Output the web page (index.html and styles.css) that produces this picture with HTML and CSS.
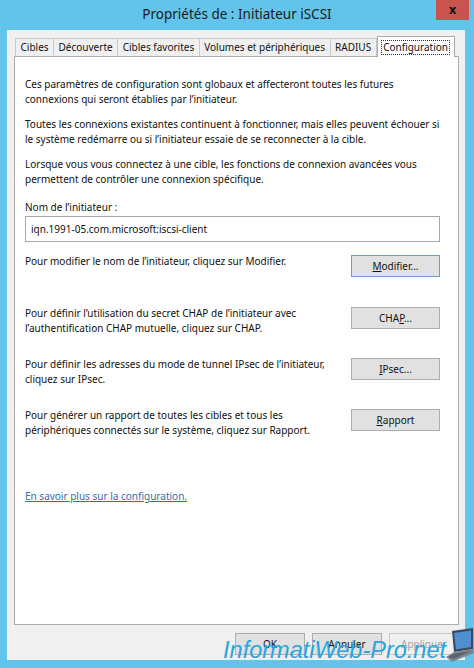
FILE: index.html
```html
<!DOCTYPE html>
<html lang="fr">
<head>
    <meta charset="UTF-8">
    <meta name="viewport" content="width=device-width, initial-scale=1.0">
    <title>Propriétés de : Initiateur iSCSI</title>
    <link rel="stylesheet" href="styles.css">
</head>
<body>

    <div class="window">
        <div class="titlebar">
            <span class="title">Propriétés de : Initiateur iSCSI</span>
            <button class="close">x</button>
        </div>

        <div class="client">
            <div class="tabs">
                <div class="tab">Cibles</div>
                <div class="tab">Découverte</div>
                <div class="tab">Cibles favorites</div>
                <div class="tab">Volumes et périphériques</div>
                <div class="tab">RADIUS</div>
                <div class="tab active"><span class="focus">Configuration</span></div>
            </div>

            <div class="panel">
                <p>Ces paramètres de configuration sont globaux et affecteront toutes les futures<br>connexions qui seront établies par l’initiateur.</p>
                <p>Toutes les connexions existantes continuent à fonctionner, mais elles peuvent échouer si<br>le système redémarre ou si l’initiateur essaie de se reconnecter à la cible.</p>
                <p>Lorsque vous vous connectez à une cible, les fonctions de connexion avancées vous<br>permettent de contrôler une connexion spécifique.</p>

                <label class="field-label" for="name">Nom de l’initiateur :</label>
                <input class="field" id="name" type="text" value="iqn.1991-05.com.microsoft:iscsi-client" readonly>

                <div class="row first">
                    <span>Pour modifier le nom de l’initiateur, cliquez sur Modifier.</span>
                    <button class="btn default"><u>M</u>odifier...</button>
                </div>
                <div class="row">
                    <span>Pour définir l’utilisation du secret CHAP de l’initiateur avec<br>l’authentification CHAP mutuelle, cliquez sur CHAP.</span>
                    <button class="btn">CHA<u>P</u>...</button>
                </div>
                <div class="row">
                    <span>Pour définir les adresses du mode de tunnel IPsec de l’initiateur,<br>cliquez sur IPsec.</span>
                    <button class="btn"><u>I</u>Psec...</button>
                </div>
                <div class="row">
                    <span>Pour générer un rapport de toutes les cibles et tous les<br>périphériques connectés sur le système, cliquez sur Rapport.</span>
                    <button class="btn"><u>R</u>apport</button>
                </div>

                <a class="more" href="#">En savoir plus sur la configuration.</a>
            </div>

            <div class="footer">
                <button class="btn small">OK</button>
                <button class="btn small">Annuler</button>
                <button class="btn small" disabled>Appliquer</button>
            </div>
        </div>

        <div class="watermark">
            <span>InformatiWeb-Pro.net</span>
            <svg width="28" height="36" viewBox="0 0 28 36">
                <path d="M6 4 L27 1 L27 22 L8 25 Z" fill="#3a4a5c"/>
                <path d="M8 6 L25 3.5 L25 20 L10 22.5 Z" fill="#4d8fd0"/>
                <path d="M0 30 L8 25 L27 22 L28 26 L6 35 Z" fill="#7c8590"/>
                <path d="M2 30 L9 26.5 L25 24 L8 32 Z" fill="#5c636b"/>
            </svg>
        </div>
    </div>

</body>
</html>
```

FILE: styles.css
```css
body {
    margin: 0;
    font-family: "Noto Sans", "Open Sans", sans-serif;
    font-size: 10px;
    color: #111;
}
.window {
    position: relative;
    width: 474px;
    height: 668px;
    background-color: #62c4ea;
    display: flex;
    flex-direction: column;
    overflow: hidden;
}
.titlebar {
    height: 30px;
    display: grid;
    grid-template-columns: 1fr auto 1fr;
    align-items: start;
}
.title {
    grid-column: 2;
    font-size: 13.5px;
    line-height: 28px;
    color: #1a1a1a;
}
.close {
    grid-column: 3;
    justify-self: end;
    width: 33px;
    height: 20px;
    margin-right: 5px;
    border: none;
    background-color: #c9544f;
    color: #111;
    font-family: "DejaVu Sans", sans-serif;
    font-weight: bold;
    font-size: 12px;
    line-height: 18px;
    padding: 0;
}
.client {
    flex: 1;
    margin: 0 9px 8px 7px;
    padding: 6px 6px 0 7px;
    background-color: #f0f0f0;
    display: flex;
    flex-direction: column;
}

/* onglets */
.tabs {
    display: flex;
    align-items: flex-end;
    height: 20px;
    padding-left: 1px;
    position: relative;
    z-index: 1;
}
.tab {
    height: 18px;
    box-sizing: border-box;
    border: 1px solid #c9c9c9;
    border-bottom: none;
    background-color: #f0f0f0;
    padding: 0 4.5px;
    line-height: 16px;
    margin-right: -1px;
    white-space: nowrap;
}
.tab.active {
    height: 21px;
    margin: 0 0 -1px 1px;
    padding: 2px 3.5px 0;
    background-color: #fff;
    border-color: #adadad;
}
.focus {
    display: inline-block;
    border: 1px dotted #333;
    line-height: 13px;
    padding: 0 1px;
}

.panel {
    flex: 1;
    background-color: #fff;
    border: 1px solid #adadad;
    padding: 20px 18px 0 10px;
    display: flex;
    flex-direction: column;
}
.panel p {
    margin: 0 0 10px;
    line-height: 15px;
    white-space: nowrap;
}
.field-label {
    margin-top: 3px;
    line-height: 15px;
}
.field {
    margin-top: 1px;
    height: 26px;
    box-sizing: border-box;
    border: 1px solid #a8a8a8;
    padding: 0 5px;
    font-family: inherit;
    font-size: 10px;
    color: #111;
    outline: none;
}
.row {
    display: flex;
    justify-content: space-between;
    align-items: flex-start;
    margin-top: 21px;
    line-height: 15px;
    white-space: nowrap;
}
.row.first {
    margin-top: 12px;
    margin-bottom: 8px;
}
.btn {
    width: 89px;
    height: 22px;
    border: 1px solid #adadad;
    background-color: #e1e1e1;
    font-family: inherit;
    font-size: 10px;
    color: #111;
    padding: 0;
    margin-top: 1px;
}
.btn.default {
    border-color: #6b9ad4;
}
.btn:disabled {
    color: #a0a0a0;
    border-color: #c8c8c8;
    background-color: #f0f0f0;
}
.more {
    margin-top: 51px;
    align-self: flex-start;
    color: #2f6fb8;
    line-height: 15px;
}
.footer {
    height: 35px;
    display: flex;
    justify-content: flex-end;
    align-items: flex-start;
    gap: 7px;
    padding-top: 8px;
    box-sizing: border-box;
}
.btn.small {
    width: 70px;
    margin-top: 0;
}

/* filigrane */
.watermark {
    position: absolute;
    right: 0;
    bottom: 5px;
    display: flex;
    align-items: flex-end;
}
.watermark span {
    font-family: "Liberation Sans", Arial, sans-serif;
    font-style: italic;
    font-size: 23.5px;
    color: #28a6df;
    line-height: 24px;
    margin-bottom: 1px;
}
```
